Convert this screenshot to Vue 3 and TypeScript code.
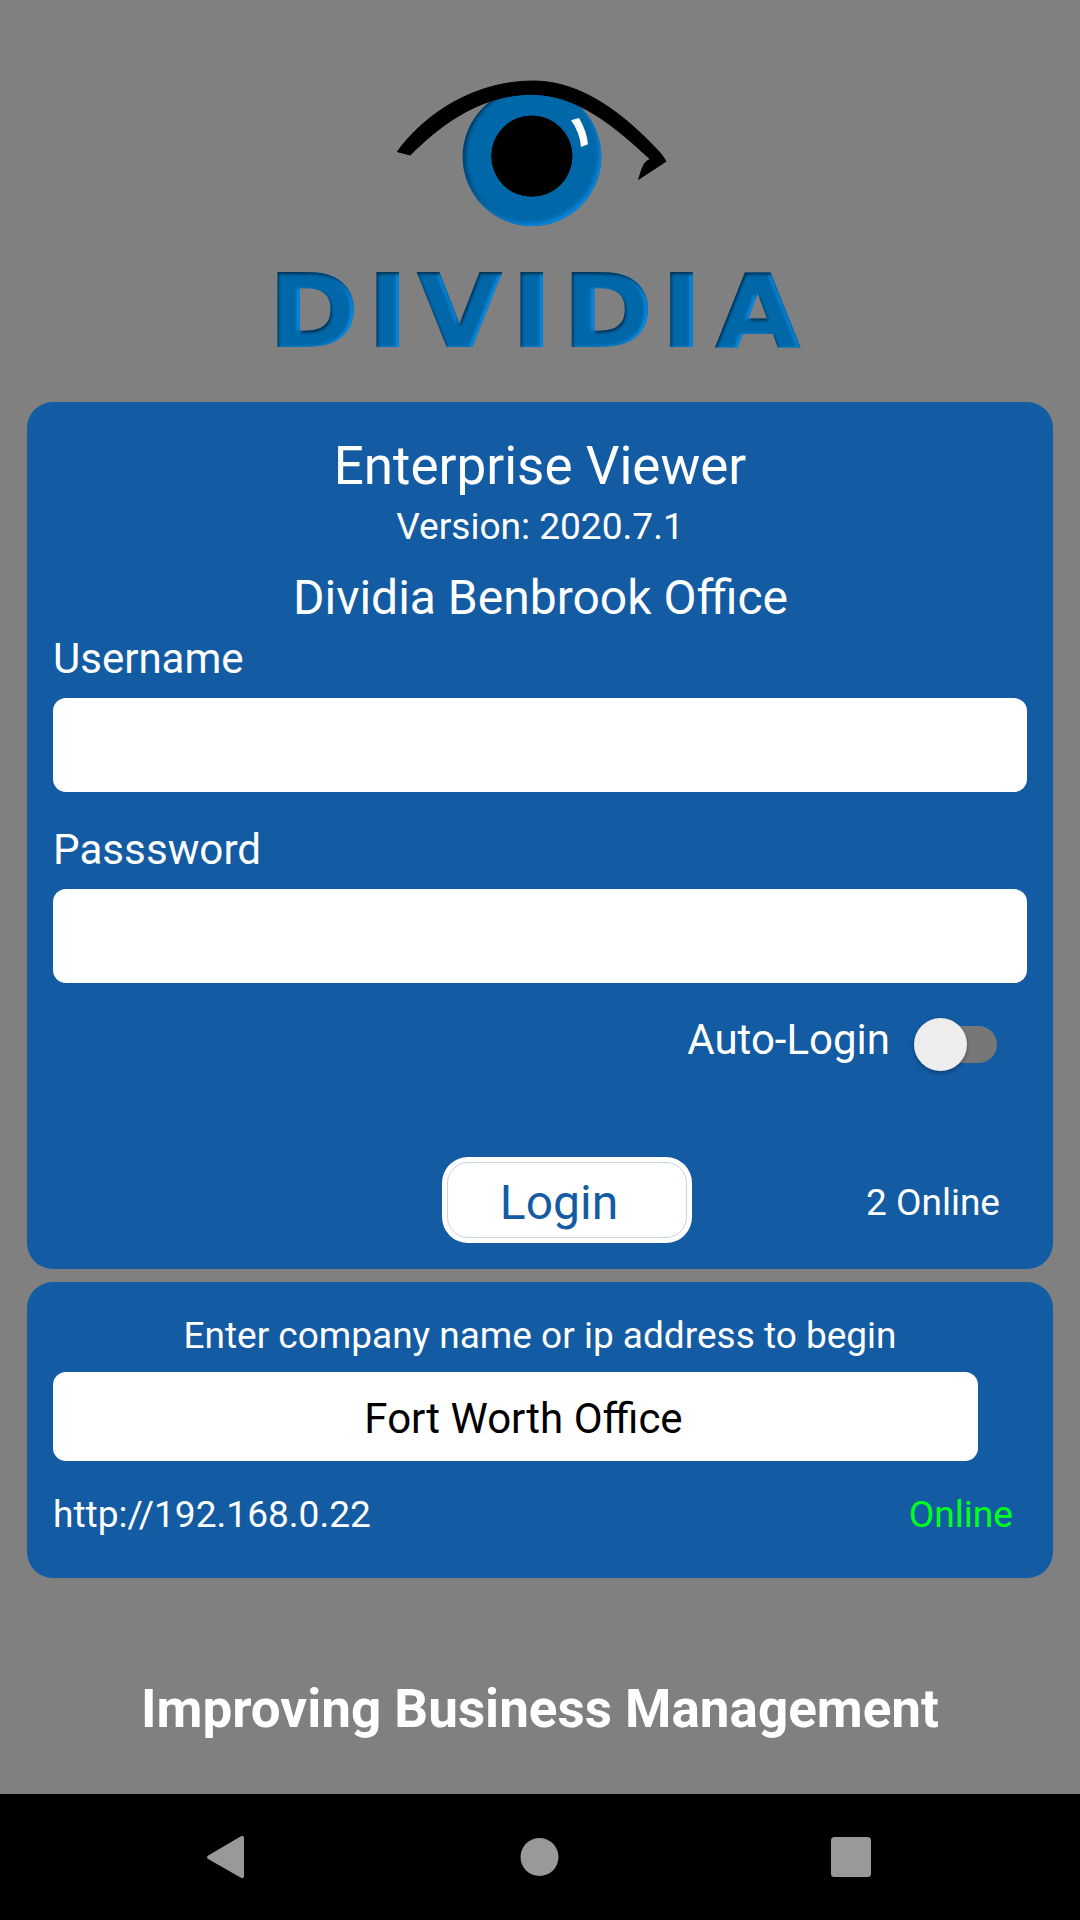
<script setup lang="ts">
import { ref } from 'vue'

const username = ref('')
const password = ref('')
const company = ref('Fort Worth Office')
const autoLogin = ref(false)
const onlineCount = ref(2)
</script>

<template>
  <div class="screen">
    <header class="logo">
      <svg class="eye" viewBox="0 0 960 540" aria-hidden="true">
        <defs>
          <filter id="bevel-eye" x="-5%" y="-5%" width="110%" height="110%" color-interpolation-filters="sRGB">
            <feGaussianBlur in="SourceAlpha" stdDeviation="6" result="b" />
            <feOffset in="b" dx="6" dy="1" result="o1" />
            <feComposite in="SourceAlpha" in2="o1" operator="out" result="dark" />
            <feFlood flood-color="#002a4a" />
            <feComposite in2="dark" operator="in" result="darkc" />
            <feOffset in="b" dx="-6" dy="-8" result="o2" />
            <feComposite in="SourceAlpha" in2="o2" operator="out" result="lite" />
            <feFlood flood-color="#0a8ae4" />
            <feComposite in2="lite" operator="in" result="litec" />
            <feMerge>
              <feMergeNode in="SourceGraphic" />
              <feMergeNode in="darkc" />
              <feMergeNode in="litec" />
            </feMerge>
          </filter>
        </defs>
        <circle cx="456" cy="290" r="208" fill="#0068a8" filter="url(#bevel-eye)" />
        <circle cx="455.500" cy="288.500" r="122" fill="#000" />
        <path d="M573 181 L597 174 Q620 212 624 253 L603 261 Q599 216 573 181 Z" fill="#fff" />
        <path
          d="M52 275 C135 160 285 63 460 63 C610 63 740 170 840 278 Q850 290 858 304 L776 358 C783 338 788 304 811 298 C705 200 592 103 455 103 C320 103 200 174 91 285 Z"
          fill="#000"
          stroke="#000"
          stroke-width="3"
        />
      </svg>
      <svg class="wordmark" viewBox="270 270 540 80">
        <defs>
          <filter id="bevel-word" x="-2%" y="-5%" width="104%" height="110%" color-interpolation-filters="sRGB">
            <feGaussianBlur in="SourceAlpha" stdDeviation="1.800" result="b" />
            <feOffset in="b" dx="1" dy="1.800" result="o1" />
            <feComposite in="SourceAlpha" in2="o1" operator="out" result="dark" />
            <feFlood flood-color="#002a4a" />
            <feComposite in2="dark" operator="in" result="darkc" />
            <feOffset in="b" dx="-2.800" dy="0" result="o2" />
            <feComposite in="SourceAlpha" in2="o2" operator="out" result="lite" />
            <feFlood flood-color="#0a90ee" />
            <feComposite in2="lite" operator="in" result="litec" />
            <feMerge>
              <feMergeNode in="SourceGraphic" />
              <feMergeNode in="litec" />
              <feMergeNode in="darkc" />
            </feMerge>
          </filter>
        </defs>
        <g filter="url(#bevel-word)">
          <text class="word" transform="scale(1.090 1)" y="345.800" x="246.500 337.500 383.200 469.500 516.500 607 657">DIVIDIA</text>
        </g>
      </svg>
    </header>

    <main class="cards">
      <section class="card login-card">
        <h1 class="title">Enterprise Viewer</h1>
        <p class="version">Version: 2020.7.1</p>
        <h2 class="office">Dividia Benbrook Office</h2>
        <label class="label" for="user">Username</label>
        <input id="user" v-model="username" class="field" type="text" />
        <label class="label second" for="pass">Passsword</label>
        <input id="pass" v-model="password" class="field" type="password" />
        <div class="auto">
          <span>Auto-Login</span>
          <button class="switch" :class="{ on: autoLogin }" aria-label="Auto-Login" @click="autoLogin = !autoLogin">
            <i class="thumb"></i>
          </button>
        </div>
        <div class="actions">
          <button class="login"><span class="login-face">Login</span></button>
          <span class="count">{{ onlineCount }} Online</span>
        </div>
      </section>

      <section class="card server-card">
        <p class="hint">Enter company name or ip address to begin</p>
        <input v-model="company" class="field company" type="text" />
        <div class="status">
          <span>http://192.168.0.22</span>
          <span class="online">Online</span>
        </div>
      </section>
    </main>

    <p class="tagline">Improving Business Management</p>

    <nav class="navbar">
      <svg width="40" height="44" viewBox="0 0 40 44">
        <path d="M3 20 L34.500 1.500 Q38 -0.500 38 3.500 V40.500 Q38 44.500 34.500 42.500 L3 24.500 Q-1 22 3 20 Z" fill="#999" />
      </svg>
      <svg width="40" height="40" viewBox="0 0 40 40"><circle cx="20.500" cy="20" r="19" fill="#999" /></svg>
      <svg width="40" height="40" viewBox="0 0 40 40"><rect width="40" height="40" rx="3.500" fill="#999" /></svg>
    </nav>
  </div>
</template>

<style>
body {
  margin: 0;
  background: #808080;
}
</style>

<style scoped>
.screen {
  width: 1080px;
  height: 1920px;
  display: flex;
  flex-direction: column;
  background: #808080;
  color: #fff;
  font-family: Roboto, 'Liberation Sans', sans-serif;
  overflow: hidden;
}
h1,
h2,
p {
  margin: 0;
  font-weight: 400;
  text-align: center;
}
button,
input {
  font: inherit;
  border: 0;
  padding: 0;
  box-sizing: border-box;
}
.logo {
  height: 402px;
  box-sizing: border-box;
  padding-top: 60px;
  display: flex;
  flex-direction: column;
  align-items: center;
}
.eye {
  width: 320px;
  height: 180px;
}
.wordmark {
  width: 540px;
  height: 80px;
  margin-top: 30px;
  overflow: visible;
}
.word {
  font-family: 'DejaVu Sans', sans-serif;
  font-weight: 700;
  font-size: 99px;
  fill: #0068a8;
  stroke: #0068a8;
  stroke-width: 2px;
}
.cards {
  display: flex;
  flex-direction: column;
  gap: 13px;
  padding: 0 27px;
}
.card {
  display: flex;
  flex-direction: column;
  box-sizing: border-box;
  padding: 0 26px;
  border-radius: 26px;
  background: #135ba3;
}
.login-card {
  height: 867px;
  padding-top: 33px;
}
.title {
  font-size: 53px;
  line-height: 62px;
}
.version {
  margin-top: 8px;
  font-size: 37.1px;
  line-height: 44px;
}
.office {
  margin-top: 21px;
  padding-left: 1px;
  font-size: 48px;
  line-height: 56px;
}
.label {
  margin-top: 8px;
  font-size: 42px;
  line-height: 50px;
}
.label.second {
  margin-top: 33px;
  font-size: 42.2px;
}
.field {
  width: 100%;
  height: 94px;
  margin-top: 14px;
  border-radius: 13px;
  background: #fff;
  color: #000;
  font-size: 42px;
  outline: none;
}
.auto {
  display: flex;
  justify-content: flex-end;
  height: 50px;
  margin-top: 32px;
  padding-right: 30px;
  font-size: 42px;
  line-height: 50px;
}
.switch {
  display: flex;
  align-items: center;
  width: 83px;
  height: 37px;
  margin: 11px 0 0 24px;
  border-radius: 19px;
  background: linear-gradient(90deg, transparent 20px, #777 20px);
}
.switch.on {
  justify-content: flex-end;
}
.thumb {
  flex: none;
  width: 53px;
  height: 53px;
  border-radius: 50%;
  background: #ededed;
  box-shadow: 0 2px 4px rgba(0, 0, 0, 0.3);
}
.actions {
  display: flex;
  align-items: flex-start;
  justify-content: space-between;
  height: 86px;
  margin-top: 92px;
  padding: 0 27px 0 389px;
}
.login {
  width: 250px;
  height: 86px;
  padding: 5px;
  border-radius: 26px;
  background: #fff;
}
.login-face {
  display: block;
  box-sizing: border-box;
  height: 76px;
  padding: 0 16px 0 0;
  border: 1px solid #c6d5e6;
  border-radius: 21px;
  color: #135ba3;
  font-size: 48px;
  line-height: 80px;
}
.count {
  margin-top: 24px;
  font-size: 37px;
  line-height: 44px;
}
.server-card {
  height: 296px;
  padding-top: 32px;
}
.hint {
  font-size: 37px;
  line-height: 44px;
}
.company {
  width: 925px;
  height: 89px;
  margin-top: 14px;
  padding: 4px 0 0 16px;
  text-align: center;
}
.status {
  display: flex;
  justify-content: space-between;
  margin-top: 32px;
  padding-right: 14px;
  font-size: 37.1px;
  line-height: 44px;
}
.online {
  color: #00ff1a;
}
.tagline {
  margin-top: 100px;
  font-size: 53px;
  font-weight: 700;
  line-height: 62px;
}
.navbar {
  display: flex;
  align-items: center;
  justify-content: space-between;
  box-sizing: border-box;
  height: 126px;
  margin-top: auto;
  padding: 0 209px 0 206px;
  background: #000;
}
</style>
